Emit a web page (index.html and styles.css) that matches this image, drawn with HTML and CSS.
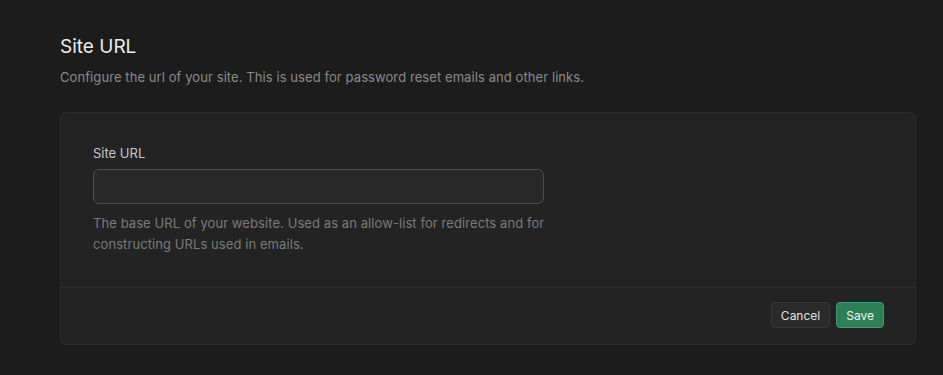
FILE: index.html
```html
<!DOCTYPE html>
<html>
<head>
<meta charset="utf-8">
<link rel="stylesheet" href="styles.css">
</head>
<body>
<main class="page">
  <h1 class="title">Site URL</h1>
  <p class="subtitle">Configure the url of your site. This is used for password reset emails and other links.</p>
  <section class="card">
    <div class="card-body">
      <label class="label" for="site-url">Site URL</label>
      <input class="input" id="site-url" type="text">
      <p class="help">The base URL of your website. Used as an allow-list for redirects and for constructing URLs used in emails.</p>
    </div>
    <div class="card-footer">
      <button class="btn btn-cancel">Cancel</button>
      <button class="btn btn-save">Save</button>
    </div>
  </section>
</main>
</body>
</html>
```
FILE: styles.css
```css
html, body {
  margin: 0;
  padding: 0;
  background: #1c1c1c;
  font-family: Inter, "Noto Sans", sans-serif;
}
.page {
  padding: 34px 27px 0 60px;
}
.title {
  margin: 0;
  font-size: 19px;
  font-weight: 400;
  color: #ededed;
  line-height: 26px;
}
.subtitle {
  margin: 7px 0 0;
  font-size: 13px;
  letter-spacing: 0.08px;
  color: #8a8a8a;
  line-height: 20px;
}
.card {
  margin-top: 25px;
  background: #232323;
  border: 1px solid #2c2c2c;
  border-radius: 6px;
}
.card-body {
  padding: 30px 32px 32px;
  display: flex;
  flex-direction: column;
  border-bottom: 1px solid #2c2c2c;
}
.label {
  font-size: 13px;
  color: #c8c8c8;
  line-height: 20px;
}
.input {
  margin-top: 6px;
  width: 451px;
  height: 35px;
  box-sizing: border-box;
  background: #282828;
  border: 1px solid #4d4d4d;
  border-radius: 6px;
  color: #ededed;
  outline: none;
}
.help {
  margin: 9px 0 0;
  width: 462px;
  font-size: 13px;
  letter-spacing: 0.08px;
  line-height: 21px;
  color: #7a7a7a;
}
.card-footer {
  display: flex;
  justify-content: flex-end;
  gap: 6px;
  padding: 14px 31px 16px;
}
.btn {
  font-family: Inter, "Noto Sans", sans-serif;
  font-size: 12px;
  height: 26px;
  padding: 0 9px;
  border-radius: 4px;
  cursor: pointer;
}
.btn-cancel {
  background: #2a2a2a;
  border: 1px solid #363636;
  color: #e0e0e0;
}
.btn-save {
  background: #2f7f56;
  border: 1px solid #3aa06a;
  color: #f2f2f2;
}
```
